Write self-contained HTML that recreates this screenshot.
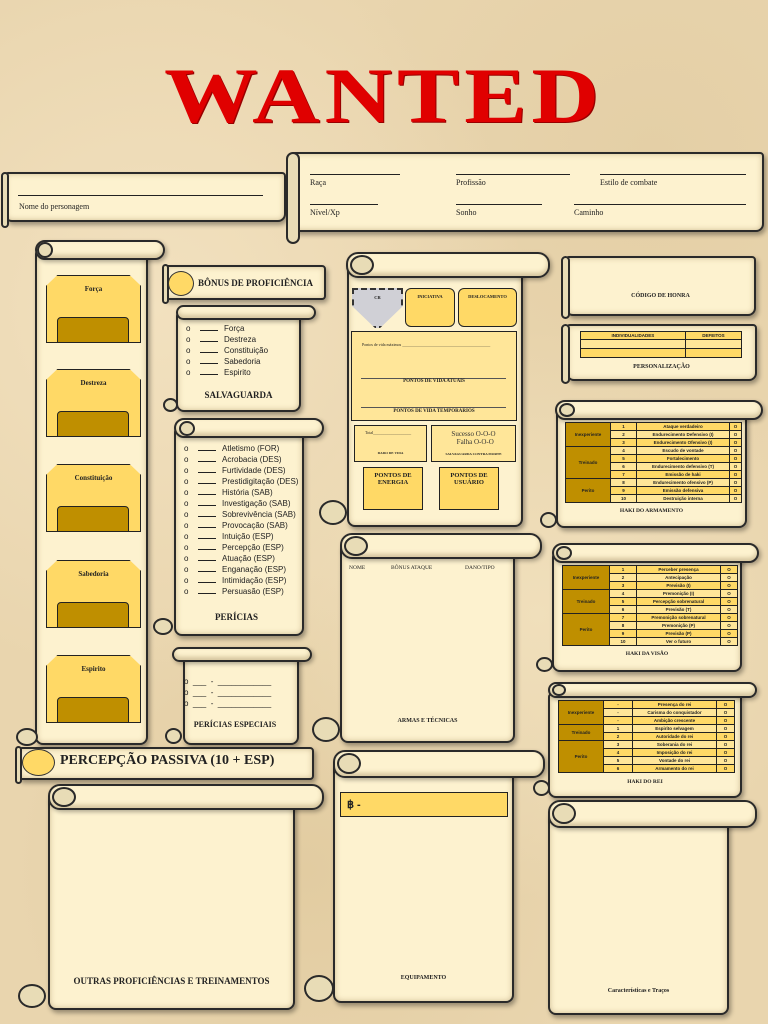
<!DOCTYPE html>
<html><head><meta charset="utf-8">
<style>
*{margin:0;padding:0;box-sizing:border-box}
body{width:768px;height:1024px;overflow:hidden;position:relative;background:#e9d5ae;font-family:"Liberation Serif",serif;color:#222}
.bg{position:absolute;inset:0;background:radial-gradient(circle at 20% 30%,#f2e1bf 0,transparent 40%),radial-gradient(circle at 70% 60%,#f0dfbb 0,transparent 35%),radial-gradient(circle at 40% 85%,#e2cca1 0,transparent 30%),radial-gradient(circle at 85% 15%,#e4cfa6 0,transparent 30%)}
.a{position:absolute}
.sc{position:absolute;background:#fdf2cf;border:2px solid #2a2a2a;border-radius:4px 4px 8px 8px;box-shadow:2px 3px 5px rgba(0,0,0,.35), inset 0 0 6px rgba(120,90,40,.35)}
.roll{position:absolute;background:#fdf2cf;border:2px solid #2a2a2a;border-radius:12px;box-shadow:2px 2px 4px rgba(0,0,0,.3), inset 0 -3px 5px rgba(120,90,40,.3)}
.curl{position:absolute;width:22px;height:22px;border:2px solid #2a2a2a;border-radius:50%;background:#e8dcb6}
.lbl{position:absolute;font-size:8px;font-weight:bold;text-align:center;text-transform:uppercase}
.attr{position:absolute;left:46px;width:95px;height:68px;background:#ffd966;border:1.5px solid #222;clip-path:polygon(12% 0,88% 0,100% 16%,100% 100%,0 100%,0 16%);}
.attrb{position:absolute;left:57px;width:72px;height:26px;background:#bf8f00;border:1.5px solid #222;border-radius:4px 4px 0 0}
.at{position:absolute;left:46px;width:95px;text-align:center;font-size:7px;font-weight:bold}
.lst{position:absolute;font-family:"Liberation Sans",sans-serif;font-size:8px;line-height:11px}
.lst div span{display:inline-block;width:14px}
.lst div u{display:inline-block;width:18px;text-decoration:none;border-bottom:1px solid #222;height:7px;margin-right:6px}
table{border-collapse:collapse;font-family:"Liberation Sans",sans-serif;font-size:4.5px;font-weight:bold}
td{border:1px solid #222;text-align:center;height:8px;padding:0;line-height:7px}
td.h{background:#bf8f00;color:#222}
tr:nth-child(odd) td.c{background:#ffd966}
tr:nth-child(even) td.c{background:#ffe699}
</style></head><body>
<div class="bg"></div>
<div class="a" style="left:84px;top:56px;width:600px;text-align:center;font-size:78px;font-weight:bold;color:#e00000;letter-spacing:4px;text-shadow:1px 1px 0 #900;line-height:80px;transform:scaleX(1.2)">WANTED</div>

<!-- name -->
<div class="sc" style="left:4px;top:172px;width:282px;height:50px"></div>
<div class="a" style="left:18px;top:195px;width:245px;border-bottom:1px solid #222"></div>
<div class="a" style="left:19px;top:202px;font-size:8px">Nome do personagem</div>
<div class="a" style="left:1px;top:172px;width:8px;height:56px;border:2px solid #2a2a2a;border-radius:4px;background:#e8dcb6"></div>

<!-- info -->
<div class="sc" style="left:290px;top:152px;width:474px;height:80px"></div>
<div class="a" style="left:286px;top:152px;width:14px;height:92px;border:2px solid #2a2a2a;border-radius:7px;background:#e8dcb6"></div>
<div class="a" style="left:310px;top:174px;width:90px;border-bottom:1px solid #222"></div>
<div class="a" style="left:456px;top:174px;width:114px;border-bottom:1px solid #222"></div>
<div class="a" style="left:600px;top:174px;width:146px;border-bottom:1px solid #222"></div>
<div class="a" style="left:310px;top:178px;font-size:8px">Raça</div>
<div class="a" style="left:456px;top:178px;font-size:8px">Profissão</div>
<div class="a" style="left:600px;top:178px;font-size:8px">Estilo de combate</div>
<div class="a" style="left:310px;top:204px;width:68px;border-bottom:1px solid #222"></div>
<div class="a" style="left:456px;top:204px;width:86px;border-bottom:1px solid #222"></div>
<div class="a" style="left:574px;top:204px;width:172px;border-bottom:1px solid #222"></div>
<div class="a" style="left:310px;top:208px;font-size:8px">Nível/Xp</div>
<div class="a" style="left:456px;top:208px;font-size:8px">Sonho</div>
<div class="a" style="left:574px;top:208px;font-size:8px">Caminho</div>

<!-- attributes column -->
<div class="sc" style="left:35px;top:250px;width:113px;height:495px"></div>
<div class="roll" style="left:35px;top:240px;width:130px;height:20px"></div>
<div class="curl" style="left:37px;top:242px;width:16px;height:16px"></div>
<div class="curl" style="left:16px;top:728px;width:22px;height:18px"></div>
<div class="attr" style="top:275px"></div><div class="attrb" style="top:317px"></div><div class="at" style="top:285px">Força</div>
<div class="attr" style="top:369px"></div><div class="attrb" style="top:411px"></div><div class="at" style="top:379px">Destreza</div>
<div class="attr" style="top:464px"></div><div class="attrb" style="top:506px"></div><div class="at" style="top:474px">Constituição</div>
<div class="attr" style="top:560px"></div><div class="attrb" style="top:602px"></div><div class="at" style="top:570px">Sabedoria</div>
<div class="attr" style="top:655px"></div><div class="attrb" style="top:697px"></div><div class="at" style="top:665px">Espirito</div>

<!-- bonus -->
<div class="sc" style="left:164px;top:265px;width:162px;height:35px;border-radius:4px"></div>
<div class="a" style="left:162px;top:264px;width:7px;height:40px;border:2px solid #2a2a2a;border-radius:4px;background:#e8dcb6"></div>
<div class="a" style="left:168px;top:271px;width:26px;height:25px;border-radius:50%;background:#ffd966;border:1.5px solid #333"></div>
<div class="a" style="left:198px;top:278px;font-size:9px;font-weight:bold">BÔNUS DE PROFICIÊNCIA</div>

<!-- salvaguarda -->
<div class="sc" style="left:176px;top:312px;width:125px;height:100px"></div>
<div class="roll" style="left:176px;top:305px;width:140px;height:15px"></div>
<div class="curl" style="left:163px;top:398px;width:15px;height:14px"></div>
<div class="lst" style="left:186px;top:323px">
<div><span>o</span><u></u>Força</div><div><span>o</span><u></u>Destreza</div><div><span>o</span><u></u>Constituição</div><div><span>o</span><u></u>Sabedoria</div><div><span>o</span><u></u>Espirito</div></div>
<div class="lbl" style="left:176px;top:390px;width:125px;font-size:9px">SALVAGUARDA</div>

<!-- pericias -->
<div class="sc" style="left:174px;top:428px;width:130px;height:208px"></div>
<div class="roll" style="left:174px;top:418px;width:150px;height:20px"></div>
<div class="curl" style="left:179px;top:421px;width:16px;height:15px"></div>
<div class="curl" style="left:153px;top:618px;width:20px;height:17px"></div>
<div class="lst" style="left:184px;top:443px">
<div><span>o</span><u></u>Atletismo (FOR)</div><div><span>o</span><u></u>Acrobacia (DES)</div><div><span>o</span><u></u>Furtividade (DES)</div><div><span>o</span><u></u>Prestidigitação (DES)</div><div><span>o</span><u></u>História (SAB)</div><div><span>o</span><u></u>Investigação (SAB)</div><div><span>o</span><u></u>Sobrevivência (SAB)</div><div><span>o</span><u></u>Provocação (SAB)</div><div><span>o</span><u></u>Intuição (ESP)</div><div><span>o</span><u></u>Percepção (ESP)</div><div><span>o</span><u></u>Atuação (ESP)</div><div><span>o</span><u></u>Enganação (ESP)</div><div><span>o</span><u></u>Intimidação (ESP)</div><div><span>o</span><u></u>Persuasão (ESP)</div></div>
<div class="lbl" style="left:174px;top:612px;width:125px;font-size:9px">PERÍCIAS</div>

<!-- pericias especiais -->
<div class="sc" style="left:183px;top:655px;width:116px;height:90px"></div>
<div class="roll" style="left:172px;top:647px;width:140px;height:15px"></div>
<div class="curl" style="left:165px;top:728px;width:17px;height:16px"></div>
<div class="lst" style="left:184px;top:676px">
<div>o &nbsp;___ &nbsp;- &nbsp;____________</div><div>o &nbsp;___ &nbsp;- &nbsp;____________</div><div>o &nbsp;___ &nbsp;- &nbsp;____________</div></div>
<div class="lbl" style="left:180px;top:720px;width:110px;font-size:8px">PERÍCIAS ESPECIAIS</div>

<!-- percepcao passiva -->
<div class="sc" style="left:18px;top:747px;width:296px;height:33px;border-radius:4px"></div>
<div class="a" style="left:15px;top:746px;width:7px;height:38px;border:2px solid #2a2a2a;border-radius:4px;background:#e8dcb6"></div>
<div class="a" style="left:22px;top:749px;width:33px;height:27px;border-radius:50%;background:#ffd966;border:1.5px solid #333"></div>
<div class="a" style="left:60px;top:753px;font-size:14px;font-weight:bold">PERCEPÇÃO PASSIVA (10 + ESP)</div>

<!-- outras -->
<div class="sc" style="left:48px;top:795px;width:247px;height:215px"></div>
<div class="roll" style="left:48px;top:784px;width:276px;height:26px"></div>
<div class="curl" style="left:52px;top:787px;width:24px;height:20px"></div>
<div class="curl" style="left:18px;top:984px;width:28px;height:24px"></div>
<div class="lbl" style="left:48px;top:976px;width:247px;font-size:9px">OUTRAS PROFICIÊNCIAS E TREINAMENTOS</div>

<!-- combat -->
<div class="sc" style="left:347px;top:262px;width:176px;height:265px"></div>
<div class="roll" style="left:346px;top:252px;width:204px;height:26px"></div>
<div class="curl" style="left:350px;top:255px;width:24px;height:20px"></div>
<div class="curl" style="left:319px;top:500px;width:28px;height:25px"></div>
<div class="a" style="left:352px;top:288px;width:51px;height:40px;background:#d0d0d6;border:2px dashed #333;clip-path:polygon(0 0,100% 0,100% 45%,55% 100%,45% 100%,0 45%)"></div>
<div class="lbl" style="left:352px;top:295px;width:51px;font-size:4.5px">CR</div>
<div class="a" style="left:405px;top:288px;width:50px;height:39px;background:#ffd966;border:1.5px solid #222;border-radius:6px"></div>
<div class="lbl" style="left:405px;top:294px;width:50px;font-size:4.5px">INICIATIVA</div>
<div class="a" style="left:458px;top:288px;width:59px;height:39px;background:#ffd966;border:1.5px solid #222;border-radius:6px"></div>
<div class="lbl" style="left:458px;top:294px;width:59px;font-size:4.5px">DESLOCAMENTO</div>
<div class="a" style="left:351px;top:331px;width:166px;height:90px;background:#ffe699;border:1.5px solid #222"></div>
<div class="a" style="left:362px;top:342px;font-size:4px">Pontos de vida máximos ____________________________________________</div>
<div class="a" style="left:361px;top:378px;width:145px;border-bottom:1px solid #555"></div>
<div class="lbl" style="left:351px;top:379px;width:166px;font-size:5px">PONTOS DE VIDA ATUAIS</div>
<div class="a" style="left:361px;top:407px;width:145px;border-bottom:1px solid #555"></div>
<div class="lbl" style="left:351px;top:409px;width:166px;font-size:5px">PONTOS DE VIDA TEMPORARIOS</div>
<div class="a" style="left:354px;top:425px;width:73px;height:37px;background:#ffe699;border:1.5px solid #222"></div>
<div class="a" style="left:365px;top:430px;font-size:4px">Total___________________</div>
<div class="lbl" style="left:354px;top:451px;width:73px;font-size:3.5px">DADO DE VIDA</div>
<div class="a" style="left:431px;top:425px;width:85px;height:37px;background:#ffe699;border:1.5px solid #222"></div>
<div class="a" style="left:431px;top:430px;width:85px;text-align:center;font-size:7px;line-height:8px;color:#333">Sucesso O-O-O<br>&nbsp;&nbsp;Falha O-O-O</div>
<div class="lbl" style="left:431px;top:452px;width:85px;font-size:3.5px">SALVAGUARDA CONTRA MORTE</div>
<div class="a" style="left:363px;top:467px;width:60px;height:43px;background:#ffd966;border:1.5px solid #222"></div>
<div class="lbl" style="left:363px;top:472px;width:60px;font-size:6.5px;line-height:7px">PONTOS DE<br>ENERGIA</div>
<div class="a" style="left:439px;top:467px;width:60px;height:43px;background:#ffd966;border:1.5px solid #222"></div>
<div class="lbl" style="left:439px;top:472px;width:60px;font-size:6.5px;line-height:7px">PONTOS DE<br>USUÁRIO</div>

<!-- armas -->
<div class="sc" style="left:340px;top:545px;width:175px;height:198px"></div>
<div class="roll" style="left:340px;top:533px;width:202px;height:26px"></div>
<div class="curl" style="left:344px;top:536px;width:24px;height:20px"></div>
<div class="curl" style="left:312px;top:717px;width:28px;height:25px"></div>
<div class="a" style="left:349px;top:565px;font-size:5.5px;word-spacing:1px">NOME</div>
<div class="a" style="left:391px;top:565px;font-size:5.5px">BÔNUS ATAQUE</div>
<div class="a" style="left:465px;top:565px;font-size:5.5px">DANO/TIPO</div>
<div class="lbl" style="left:340px;top:718px;width:175px;font-size:6px">ARMAS E TÉCNICAS</div>

<!-- equipamento -->
<div class="sc" style="left:333px;top:763px;width:181px;height:240px"></div>
<div class="roll" style="left:333px;top:750px;width:212px;height:28px"></div>
<div class="curl" style="left:337px;top:753px;width:24px;height:21px"></div>
<div class="curl" style="left:304px;top:975px;width:30px;height:27px"></div>
<div class="a" style="left:340px;top:792px;width:168px;height:25px;background:#ffd966;border:1.5px solid #222;font-family:'Liberation Sans',sans-serif;font-weight:bold;font-size:11px;padding:5px 6px">฿ -</div>
<div class="lbl" style="left:333px;top:975px;width:181px;font-size:6px">EQUIPAMENTO</div>

<!-- codigo de honra -->
<div class="sc" style="left:565px;top:256px;width:191px;height:60px"></div>
<div class="a" style="left:561px;top:256px;width:9px;height:63px;border:2px solid #2a2a2a;border-radius:5px;background:#e8dcb6"></div>
<div class="lbl" style="left:565px;top:293px;width:191px;font-size:6px">CÓDIGO DE HONRA</div>

<!-- personalizacao -->
<div class="sc" style="left:566px;top:324px;width:191px;height:57px"></div>
<div class="a" style="left:561px;top:324px;width:9px;height:60px;border:2px solid #2a2a2a;border-radius:5px;background:#e8dcb6"></div>
<table class="a" style="left:580px;top:331px;width:162px">
<tr><td class="c" style="background:#ffd966;height:7px">INDIVIDUALIDADES</td><td class="c" style="background:#ffd966">DEFEITOS</td></tr>
<tr><td class="c" style="background:#ffe699;height:9px"></td><td class="c" style="background:#ffe699"></td></tr>
<tr><td class="c" style="background:#ffd966;height:9px"></td><td class="c" style="background:#ffd966"></td></tr>
</table>
<div class="lbl" style="left:566px;top:364px;width:191px;font-size:6px">PERSONALIZAÇÃO</div>

<!-- haki armamento -->
<div class="sc" style="left:556px;top:410px;width:191px;height:118px"></div>
<div class="roll" style="left:555px;top:400px;width:208px;height:20px"></div>
<div class="curl" style="left:559px;top:403px;width:16px;height:14px"></div>
<div class="curl" style="left:540px;top:512px;width:17px;height:16px"></div>
<table class="a" style="left:565px;top:422px;width:177px">
<tr><td class="h" rowspan="3" style="width:45px">Inexperiente</td><td class="c" style="width:26px">1</td><td class="c">Ataque verdadeiro</td><td class="c" style="width:12px">O</td></tr>
<tr><td class="c">2</td><td class="c">Endurecimento Defensivo (I)</td><td class="c">O</td></tr>
<tr><td class="c">3</td><td class="c">Endurecimento Ofensivo (I)</td><td class="c">O</td></tr>
<tr><td class="h" rowspan="4">Treinado</td><td class="c">4</td><td class="c">Escudo de vontade</td><td class="c">O</td></tr>
<tr><td class="c">5</td><td class="c">Fortalecimento</td><td class="c">O</td></tr>
<tr><td class="c">6</td><td class="c">Endurecimento defensivo (T)</td><td class="c">O</td></tr>
<tr><td class="c">7</td><td class="c">Emissão de haki</td><td class="c">O</td></tr>
<tr><td class="h" rowspan="3">Perito</td><td class="c">8</td><td class="c">Endurecimento ofensivo (P)</td><td class="c">O</td></tr>
<tr><td class="c">9</td><td class="c">Emissão defensiva</td><td class="c">O</td></tr>
<tr><td class="c">10</td><td class="c">Destruição interna</td><td class="c">O</td></tr>
</table>
<div class="lbl" style="left:556px;top:508px;width:191px;font-size:5.5px">HAKI DO ARMAMENTO</div>

<!-- haki visao -->
<div class="sc" style="left:552px;top:553px;width:190px;height:119px"></div>
<div class="roll" style="left:552px;top:543px;width:207px;height:20px"></div>
<div class="curl" style="left:556px;top:546px;width:16px;height:14px"></div>
<div class="curl" style="left:536px;top:657px;width:17px;height:15px"></div>
<table class="a" style="left:562px;top:565px;width:176px">
<tr><td class="h" rowspan="3" style="width:47px">Inexperiente</td><td class="c" style="width:27px">1</td><td class="c">Perceber presença</td><td class="c" style="width:17px">O</td></tr>
<tr><td class="c">2</td><td class="c">Antecipação</td><td class="c">O</td></tr>
<tr><td class="c">3</td><td class="c">Previsão (I)</td><td class="c">O</td></tr>
<tr><td class="h" rowspan="3">Treinado</td><td class="c">4</td><td class="c">Premonição (I)</td><td class="c">O</td></tr>
<tr><td class="c">5</td><td class="c">Percepção sobrenatural</td><td class="c">O</td></tr>
<tr><td class="c">6</td><td class="c">Previsão (T)</td><td class="c">O</td></tr>
<tr><td class="h" rowspan="4">Perito</td><td class="c">7</td><td class="c">Premonição sobrenatural</td><td class="c">O</td></tr>
<tr><td class="c">8</td><td class="c">Premonição (P)</td><td class="c">O</td></tr>
<tr><td class="c">9</td><td class="c">Previsão (P)</td><td class="c">O</td></tr>
<tr><td class="c">10</td><td class="c">Ver o futuro</td><td class="c">O</td></tr>
</table>
<div class="lbl" style="left:552px;top:651px;width:190px;font-size:5.5px">HAKI DA VISÃO</div>

<!-- haki rei -->
<div class="sc" style="left:548px;top:693px;width:194px;height:105px"></div>
<div class="roll" style="left:548px;top:682px;width:209px;height:16px"></div>
<div class="curl" style="left:552px;top:684px;width:14px;height:12px"></div>
<div class="curl" style="left:533px;top:780px;width:17px;height:16px"></div>
<table class="a" style="left:558px;top:700px;width:177px">
<tr><td class="h" rowspan="3" style="width:45px">Inexperiente</td><td class="c" style="width:29px">-</td><td class="c">Presença do rei</td><td class="c" style="width:18px">O</td></tr>
<tr><td class="c">-</td><td class="c">Carisma do conquistador</td><td class="c">O</td></tr>
<tr><td class="c">-</td><td class="c">Ambição crescente</td><td class="c">O</td></tr>
<tr><td class="h" rowspan="2">Treinado</td><td class="c">1</td><td class="c">Espirito selvagem</td><td class="c">O</td></tr>
<tr><td class="c">2</td><td class="c">Autoridade do rei</td><td class="c">O</td></tr>
<tr><td class="h" rowspan="4">Perito</td><td class="c">3</td><td class="c">Soberania do rei</td><td class="c">O</td></tr>
<tr><td class="c">4</td><td class="c">Imposição do rei</td><td class="c">O</td></tr>
<tr><td class="c">5</td><td class="c">Vontade do rei</td><td class="c">O</td></tr>
<tr><td class="c">6</td><td class="c">Armamento do rei</td><td class="c">O</td></tr>
</table>
<div class="lbl" style="left:548px;top:779px;width:194px;font-size:5.5px">HAKI DO REI</div>

<!-- caracteristicas -->
<div class="sc" style="left:548px;top:812px;width:181px;height:203px"></div>
<div class="roll" style="left:548px;top:800px;width:209px;height:28px"></div>
<div class="curl" style="left:552px;top:803px;width:24px;height:21px"></div>
<div class="a" style="left:548px;top:988px;width:181px;text-align:center;font-size:6px;font-weight:bold">Características e Traços</div>
</body></html>
